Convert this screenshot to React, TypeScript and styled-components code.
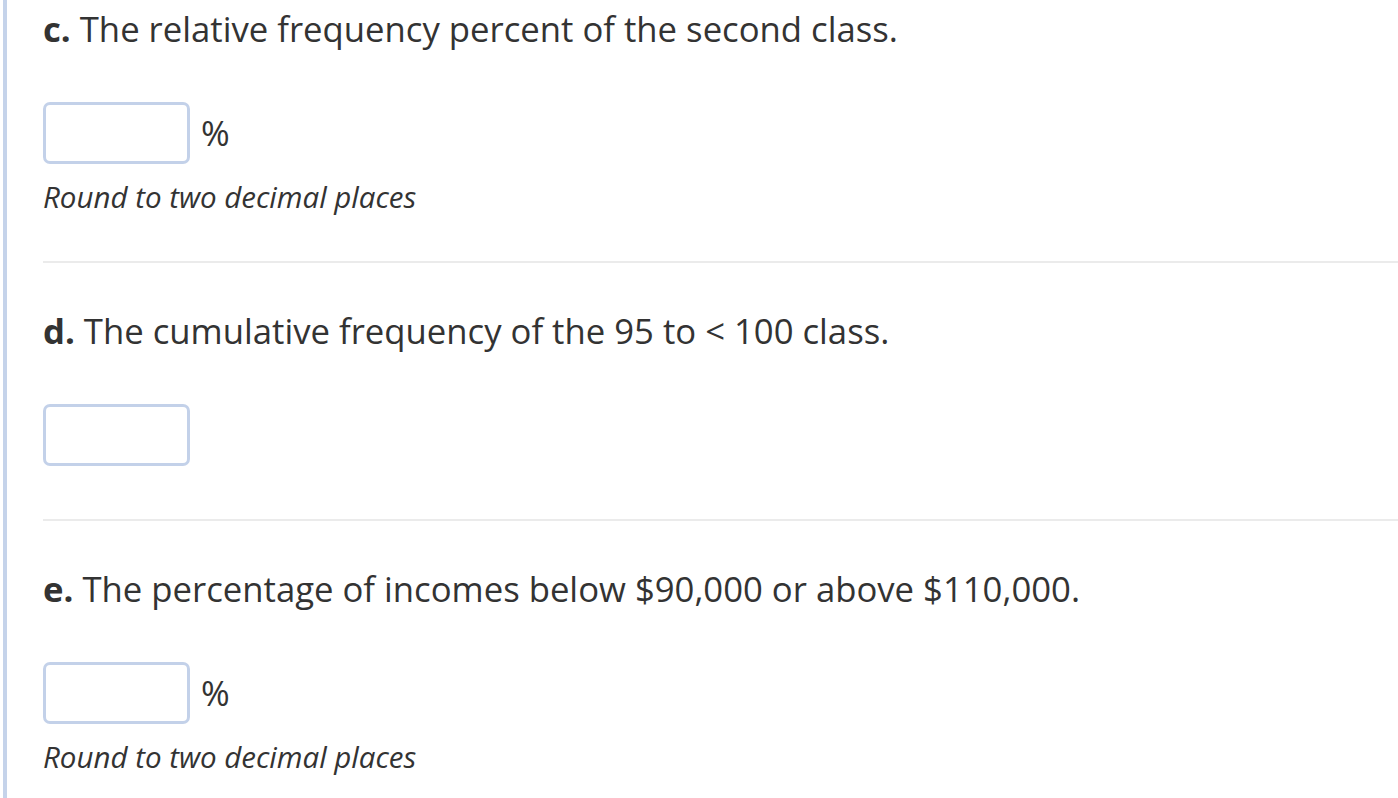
import React from "react";
import styled, { createGlobalStyle } from "styled-components";

const Global = createGlobalStyle`
  html, body { margin: 0; padding: 0; background: #ffffff; }
  body { font-family: "Open Sans", "Noto Sans", sans-serif; color: #333333; }
`;

const Page = styled.div`
  display: flex;
  min-height: 798px;
  padding-left: 3px;
`;

const Rail = styled.div`
  width: 4px;
  flex: 0 0 4px;
  background: #c5d3ea;
`;

const Content = styled.main`
  flex: 1;
  padding-left: 36px;
  display: flex;
  flex-direction: column;
`;

const Part = styled.section<{ $first?: boolean; $last?: boolean }>`
  padding-top: ${(p) => (p.$first ? "5px" : "44px")};
  padding-bottom: ${(p) => (p.$last ? "0" : "46px")};
  border-bottom: ${(p) => (p.$last ? "none" : "2px solid #ebebeb")};
`;

const Question = styled.p`
  margin: 0;
  font-size: 34.7px;
  line-height: 47px;
  color: #333333;
`;

const Label = styled.b`
  font-weight: 700;
`;

const AnswerRow = styled.div`
  display: flex;
  align-items: center;
  gap: 11px;
  margin-top: 50px;
  margin-bottom: 7px;
`;

const Box = styled.input`
  box-sizing: border-box;
  width: 147px;
  height: 62px;
  border: 3px solid #c3d1e9;
  border-radius: 7px;
  background: #ffffff;
  outline: none;
  margin: 0;
  padding: 0 8px;
  font: inherit;
`;

const Unit = styled.span`
  font-size: 34.7px;
  line-height: 40px;
  color: #333333;
`;

const Hint = styled.p`
  margin: 15px 0 0;
  font-size: 29.5px;
  line-height: 36px;
  font-style: italic;
  color: #333333;
`;

type Item = {
  label: string;
  text: string;
  unit?: string;
  hint?: string;
};

const items: Item[] = [
  { label: "c.", text: "The relative frequency percent of the second class.", unit: "%", hint: "Round to two decimal places" },
  { label: "d.", text: "The cumulative frequency of the 95 to < 100 class." },
  { label: "e.", text: "The percentage of incomes below $90,000 or above $110,000.", unit: "%", hint: "Round to two decimal places" },
];

export default function App() {
  return (
    <>
      <Global />
      <Page>
        <Rail />
        <Content>
          {items.map((it, i) => (
            <Part key={it.label} $first={i === 0} $last={i === items.length - 1}>
              <Question>
                <Label>{it.label}</Label> {it.text}
              </Question>
              <AnswerRow>
                <Box type="text" aria-label={`answer ${it.label}`} />
                {it.unit && <Unit>{it.unit}</Unit>}
              </AnswerRow>
              {it.hint && <Hint>{it.hint}</Hint>}
            </Part>
          ))}
        </Content>
      </Page>
    </>
  );
}
